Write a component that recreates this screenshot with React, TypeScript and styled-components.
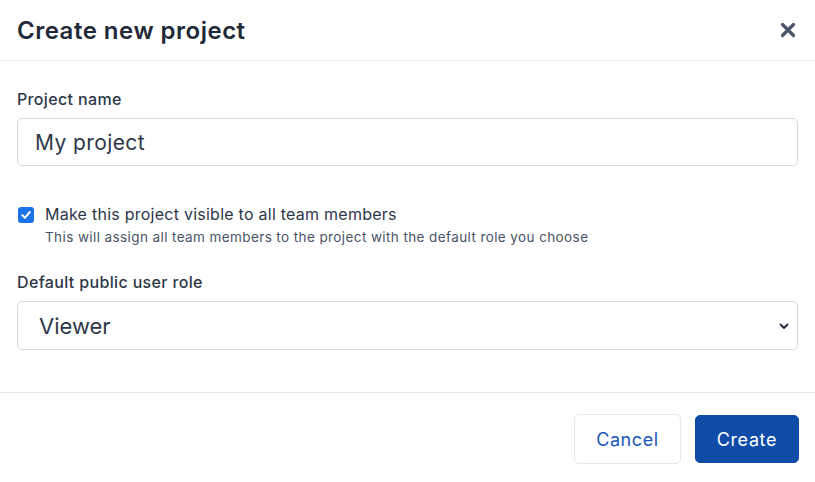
import styled, { createGlobalStyle } from "styled-components";

const GlobalStyle = createGlobalStyle`
  html, body {
    margin: 0;
    padding: 0;
    background: #ffffff;
    font-family: Inter, "Noto Sans", sans-serif;
    color: #2d3748;
  }
  * { box-sizing: border-box; }
`;

const Dialog = styled.div`
  width: 815px;
  height: 482px;
  background: #fff;
  display: flex;
  flex-direction: column;
`;

const Header = styled.header`
  height: 61px;
  padding: 0 17px;
  display: flex;
  align-items: center;
  justify-content: space-between;
  border-bottom: 1px solid #e5e7eb;
`;

const Title = styled.h2`
  margin: 0;
  font-size: 24px;
  font-weight: 600;
  color: #1f2937;
  letter-spacing: 0.5px;
`;

const CloseButton = styled.button`
  border: 0;
  background: none;
  padding: 0;
  width: 24px;
  height: 24px;
  display: flex;
  align-items: center;
  justify-content: center;
  color: #4a5568;
  cursor: pointer;
  margin-right: -2px;
`;

const Body = styled.div`
  padding: 28px 17px 0;
  display: flex;
  flex-direction: column;
  height: 332px;
  border-bottom: 1px solid #e5e7eb;
`;

const Label = styled.label`
  display: block;
  font-size: 16px;
  font-weight: 500;
  color: #2d3748;
  margin-bottom: 9px;
  letter-spacing: 0.35px;
`;

const TextInput = styled.input`
  width: 100%;
  height: 48px;
  border: 1px solid #d4d7dc;
  border-radius: 5px;
  padding: 0 17px;
  font-family: inherit;
  font-size: 21px;
  letter-spacing: 0.4px;
  color: #2d3748;
  outline: none;
`;

const CheckRow = styled.div`
  display: flex;
  gap: 11px;
  margin-top: 35px;
`;

const Check = styled.span`
  width: 16px;
  height: 16px;
  margin-top: 6px;
  margin-left: 1px;
  border-radius: 3px;
  background: #1a73e8;
  display: flex;
  align-items: center;
  justify-content: center;
  flex-shrink: 0;
`;

const CheckText = styled.div`
  display: flex;
  flex-direction: column;
`;

const CheckTitle = styled.span`
  font-size: 16px;
  color: #2d3748;
  line-height: 26px;
  letter-spacing: 0.25px;
`;

const CheckHint = styled.span`
  font-size: 13.5px;
  color: #4a5568;
  line-height: 20px;
  letter-spacing: 0.4px;
`;

const Field = styled.div`
  margin-top: 25px;
`;

const SelectBox = styled.div`
  width: 100%;
  height: 49px;
  border: 1px solid #d4d7dc;
  border-radius: 5px;
  padding: 0 21px;
  display: flex;
  align-items: center;
  justify-content: space-between;
  font-size: 22px;
  color: #2d3748;
`;

const Chevron = styled.span`
  display: flex;
  margin-right: -14px;
  color: #1f2937;
`;

const Footer = styled.footer`
  flex: 1;
  display: flex;
  justify-content: flex-end;
  align-items: flex-start;
  gap: 14px;
  padding: 21px 16px 0;
`;

const Button = styled.button<{ $primary?: boolean }>`
  height: ${(p) => (p.$primary ? "48px" : "50px")};
  margin-top: ${(p) => (p.$primary ? "1px" : "0")};
  padding: 0 21px;
  border-radius: 5px;
  font-family: inherit;
  font-size: 18px;
  letter-spacing: 0.6px;
  cursor: pointer;
  border: 1px solid ${(p) => (p.$primary ? "#0f4ca8" : "#e5e7eb")};
  background: ${(p) => (p.$primary ? "#0f4ca8" : "#fff")};
  color: ${(p) => (p.$primary ? "#fff" : "#1a56b8")};
`;

export default function App() {
  return (
    <Dialog>
      <GlobalStyle />
      <Header>
        <Title>Create new project</Title>
        <CloseButton aria-label="Close">
          <svg width="18" height="18" viewBox="0 0 18 18">
            <path d="M3.5 3.5 L14.5 14.5 M14.5 3.5 L3.5 14.5" stroke="currentColor" strokeWidth="3.2" strokeLinecap="round" />
          </svg>
        </CloseButton>
      </Header>
      <Body>
        <Label>Project name</Label>
        <TextInput defaultValue="My project" />
        <CheckRow>
          <Check>
            <svg width="12" height="12" viewBox="0 0 12 12">
              <path d="M2.3 6.3 L4.9 8.8 L9.8 3" stroke="#fff" strokeWidth="2" fill="none" strokeLinecap="round" strokeLinejoin="round" />
            </svg>
          </Check>
          <CheckText>
            <CheckTitle>Make this project visible to all team members</CheckTitle>
            <CheckHint>This will assign all team members to the project with the default role you choose</CheckHint>
          </CheckText>
        </CheckRow>
        <Field>
          <Label>Default public user role</Label>
          <SelectBox>
            Viewer
            <Chevron>
              <svg width="12" height="12" viewBox="0 0 12 12">
                <path d="M2.5 4.5 L6 8 L9.5 4.5" stroke="currentColor" strokeWidth="1.8" fill="none" strokeLinecap="round" strokeLinejoin="round" />
              </svg>
            </Chevron>
          </SelectBox>
        </Field>
      </Body>
      <Footer>
        <Button>Cancel</Button>
        <Button $primary>Create</Button>
      </Footer>
    </Dialog>
  );
}
